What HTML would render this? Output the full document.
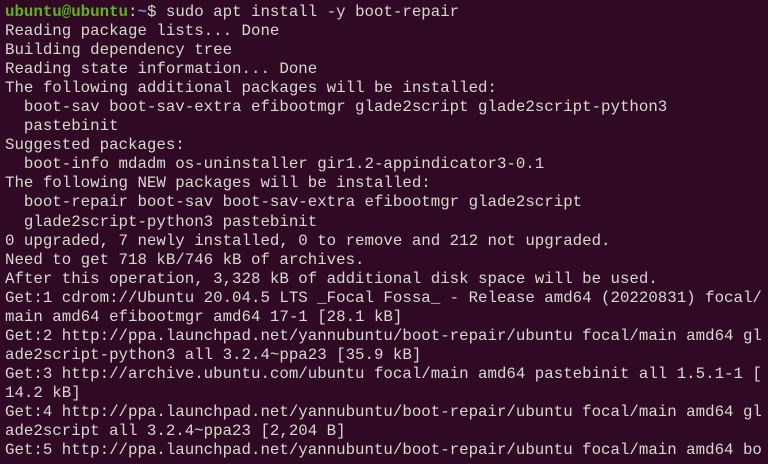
<!DOCTYPE html>
<html><head><style>
html,body{margin:0;padding:0;}
body{width:768px;height:464px;background:#300a24;overflow:hidden;}
pre{margin:0;position:absolute;left:5px;top:3px;font-family:"Liberation Mono",monospace;font-size:15.78px;line-height:19.04px;color:#d8d8d0;white-space:pre;}
.g{color:#5fb31f;font-weight:bold}.b{color:#6f8fd0;font-weight:bold}
</style></head><body>
<pre><span class="g">ubuntu@ubuntu</span>:<span class="b">~</span>$ sudo apt install -y boot-repair
Reading package lists... Done
Building dependency tree
Reading state information... Done
The following additional packages will be installed:
  boot-sav boot-sav-extra efibootmgr glade2script glade2script-python3
  pastebinit
Suggested packages:
  boot-info mdadm os-uninstaller gir1.2-appindicator3-0.1
The following NEW packages will be installed:
  boot-repair boot-sav boot-sav-extra efibootmgr glade2script
  glade2script-python3 pastebinit
0 upgraded, 7 newly installed, 0 to remove and 212 not upgraded.
Need to get 718 kB/746 kB of archives.
After this operation, 3,328 kB of additional disk space will be used.
Get:1 cdrom://Ubuntu 20.04.5 LTS _Focal Fossa_ - Release amd64 (20220831) focal/
main amd64 efibootmgr amd64 17-1 [28.1 kB]
Get:2 http://ppa.launchpad.net/yannubuntu/boot-repair/ubuntu focal/main amd64 gl
ade2script-python3 all 3.2.4~ppa23 [35.9 kB]
Get:3 http://archive.ubuntu.com/ubuntu focal/main amd64 pastebinit all 1.5.1-1 [
14.2 kB]
Get:4 http://ppa.launchpad.net/yannubuntu/boot-repair/ubuntu focal/main amd64 gl
ade2script all 3.2.4~ppa23 [2,204 B]
Get:5 http://ppa.launchpad.net/yannubuntu/boot-repair/ubuntu focal/main amd64 bo</pre>
</body></html>
